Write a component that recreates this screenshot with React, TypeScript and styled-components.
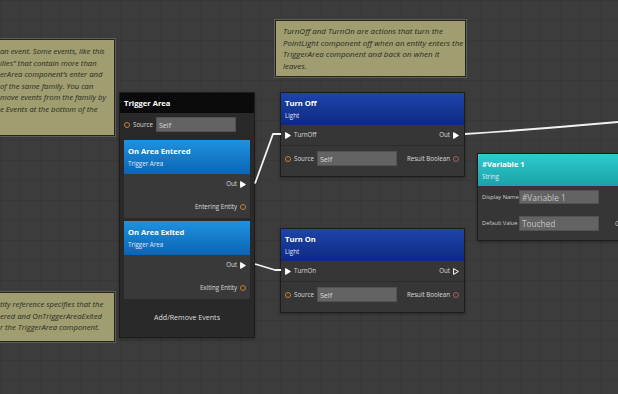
import React from "react";
import styled, { createGlobalStyle } from "styled-components";

const GlobalStyle = createGlobalStyle`
  html, body {
    margin: 0;
    padding: 0;
    background: #3c3c3c;
  }
  body {
    font-family: "Open Sans", "Liberation Sans", sans-serif;
  }
`;

const Canvas = styled.div`
  position: relative;
  width: 618px;
  height: 394px;
  overflow: hidden;
  background-color: #3c3c3c;
  background-image: linear-gradient(rgba(0, 0, 0, 0.06) 1px, transparent 1px),
    linear-gradient(90deg, rgba(0, 0, 0, 0.06) 1px, transparent 1px);
  background-size: 20px 20px;
`;

type Box = { $x: number; $y: number; $w: number; $h: number };

const Comment = styled.div<Box & { $size?: number; $pad?: string }>`
  position: absolute;
  left: ${(p) => p.$x}px;
  top: ${(p) => p.$y}px;
  width: ${(p) => p.$w}px;
  height: ${(p) => p.$h}px;
  box-sizing: border-box;
  padding: ${(p) => p.$pad ?? "6px 9px"};
  background: #a09e71;
  border: 1px solid #26261e;
  box-shadow: 0 0 0 1px #5c5c52;
  color: #29291b;
  font-style: italic;
  font-size: ${(p) => p.$size ?? 7.7}px;
  line-height: 11.6px;
  white-space: nowrap;
  overflow: hidden;
`;

const Node = styled.div<Box & { $dark?: boolean }>`
  position: absolute;
  left: ${(p) => p.$x}px;
  top: ${(p) => p.$y}px;
  width: ${(p) => p.$w}px;
  height: ${(p) => p.$h}px;
  box-sizing: border-box;
  display: flex;
  flex-direction: column;
  background: ${(p) => (p.$dark ? "#292929" : "#363636")};
  border: 1px solid #1d1d1d;
  box-shadow: 0 1px 3px rgba(0, 0, 0, 0.35);
  color: #dadada;
`;

const headerTones = {
  black: "#0a0a0a",
  event: "linear-gradient(180deg, #1e92e0 0%, #0c64b4 100%)",
  action: "linear-gradient(180deg, #1e44ac 0%, #0c2a80 100%)",
  variable: "linear-gradient(180deg, #2fcbcf 0%, #19a2a7 100%)",
};

const Header = styled.div<{ $tone: keyof typeof headerTones; $h: number }>`
  flex: none;
  height: ${(p) => p.$h}px;
  box-sizing: border-box;
  padding: 0 4px;
  display: flex;
  flex-direction: column;
  justify-content: center;
  gap: 1px;
  background: ${(p) => headerTones[p.$tone]};
`;

const Title = styled.div`
  font-size: 7.6px;
  font-weight: 700;
  line-height: 12px;
  color: #ffffff;
`;

const Subtitle = styled.div`
  font-size: 6.2px;
  line-height: 12px;
  color: #e2ebfb;
`;

const Row = styled.div<{ $h: number; $line?: boolean }>`
  flex: none;
  height: ${(p) => p.$h}px;
  box-sizing: border-box;
  padding: 0 5px 0 4px;
  display: flex;
  align-items: center;
  justify-content: space-between;
  border-bottom: ${(p) => (p.$line ? "1px solid #2c2c2c" : "none")};
`;

const Pin = styled.div<{ $end?: boolean }>`
  display: flex;
  align-items: center;
  gap: 3px;
  margin-left: ${(p) => (p.$end ? "auto" : "0")};
`;

const Label = styled.span`
  font-size: 6.2px;
  line-height: 12px;
  color: #dcdcdc;
  white-space: nowrap;
`;

const Ring = styled.span<{ $color: string }>`
  width: 6px;
  height: 6px;
  box-sizing: border-box;
  border: 1px solid ${(p) => p.$color};
  border-radius: 50%;
`;

const ValueBox = styled.div<{ $w: number; $h: number; $large?: boolean }>`
  width: ${(p) => p.$w}px;
  height: ${(p) => p.$h}px;
  box-sizing: border-box;
  padding-left: 2px;
  display: flex;
  align-items: center;
  background: #636363;
  border: 1px solid #525252;
  font-size: ${(p) => (p.$large ? 8.3 : 7.2)}px;
  color: ${(p) => (p.$large ? "#c4c4c4" : "#dadada")};
  white-space: nowrap;
  overflow: hidden;
`;

const EventList = styled.div`
  display: flex;
  flex-direction: column;
  gap: 3px;
  padding: 4px 4px 0;
`;

const EventCard = styled.div`
  background: #393939;
`;

const CardBody = styled.div`
  display: flex;
  flex-direction: column;
  gap: 11px;
  padding: 4px 4px 5px;
`;

const CardRow = styled.div`
  height: 12px;
  display: flex;
  align-items: center;
  justify-content: flex-end;
`;

const Footer = styled.div`
  flex: 1;
  display: flex;
  align-items: center;
  justify-content: center;
  padding-bottom: 3px;
  font-size: 7.1px;
  color: #dedede;
`;

const FieldList = styled.div`
  display: flex;
  flex-direction: column;
  gap: 4px;
  padding-bottom: 5px;
`;

const FieldRow = styled.div`
  height: 22px;
  display: flex;
  align-items: center;
  gap: 3px;
  padding-left: 4px;
`;

const FieldLabel = styled.span`
  width: 34px;
  font-size: 5.7px;
  color: #cfcfcf;
  white-space: nowrap;
`;

const Trailing = styled.span`
  margin-left: 13px;
  font-size: 6.5px;
  color: #cfcfcf;
`;

const Wires = styled.svg`
  position: absolute;
  left: 0;
  top: 0;
  width: 618px;
  height: 394px;
  pointer-events: none;
  path {
    fill: none;
    stroke: #f2f2f2;
    stroke-width: 1.8;
    stroke-linejoin: round;
  }
`;

const Exec = ({ filled = true }: { filled?: boolean }) => (
  <svg width="6" height="7" viewBox="0 0 6 7">
    <polygon
      points="0.6,0.6 5.4,3.5 0.6,6.4"
      fill={filled ? "#ffffff" : "none"}
      stroke="#ffffff"
      strokeWidth="1"
    />
  </svg>
);

const ORANGE = "#c47f3c";
const ROSE = "#9a6464";

const leftNote = [
  "an event. Some events, like this",
  "ilies\u201d that contain more than",
  "erArea component\u2019s enter and",
  "of the same family. You can",
  "move events from the family by",
  "e Events at the bottom of the",
];

const topNote = [
  "TurnOff and TurnOn are actions that turn the",
  "PointLight component off when an entity enters the",
  "TriggerArea component and back on when it",
  "leaves.",
];

const bottomNote = [
  "tity reference specifies that the",
  "ered and OnTriggerAreaExited",
  "r the TriggerArea component.",
];

const events = [
  { name: "On Area Entered", entity: "Entering Entity" },
  { name: "On Area Exited", entity: "Exiting Entity" },
];

const actions = [
  { name: "Turn Off", y: 92, out: true },
  { name: "Turn On", y: 228, out: false },
];

export default function App() {
  return (
    <>
      <GlobalStyle />
      <Canvas>
        <Comment $x={-10} $y={39} $w={125} $h={97}>
          {leftNote.map((line) => (
            <div key={line}>{line}</div>
          ))}
        </Comment>
        <Comment $x={275} $y={20} $w={191} $h={57} $size={8} $pad="4px 7px">
          {topNote.map((line) => (
            <div key={line}>{line}</div>
          ))}
        </Comment>
        <Comment $x={-10} $y={292} $w={125} $h={50}>
          {bottomNote.map((line) => (
            <div key={line}>{line}</div>
          ))}
        </Comment>

        <Node $x={119} $y={92} $w={136} $h={246} $dark>
          <Header $tone="black" $h={20}>
            <Title>Trigger Area</Title>
          </Header>
          <Row $h={23}>
            <Pin>
              <Ring $color={ORANGE} />
              <Label>Source</Label>
              <ValueBox $w={80} $h={15}>Self</ValueBox>
            </Pin>
          </Row>
          <EventList>
            {events.map((ev) => (
              <EventCard key={ev.name}>
                <Header $tone="event" $h={34}>
                  <Title>{ev.name}</Title>
                  <Subtitle>Trigger Area</Subtitle>
                </Header>
                <CardBody>
                  <CardRow>
                    <Pin>
                      <Label>Out</Label>
                      <Exec />
                    </Pin>
                  </CardRow>
                  <CardRow>
                    <Pin>
                      <Label>{ev.entity}</Label>
                      <Ring $color={ORANGE} />
                    </Pin>
                  </CardRow>
                </CardBody>
              </EventCard>
            ))}
          </EventList>
          <Footer>Add/Remove Events</Footer>
        </Node>

        {actions.map((a) => (
          <Node key={a.name} $x={280} $y={a.y} $w={185} $h={85}>
            <Header $tone="action" $h={32}>
              <Title>{a.name}</Title>
              <Subtitle>Light</Subtitle>
            </Header>
            <Row $h={21} $line>
              <Pin>
                <Exec />
                <Label>{a.name.replace(" ", "")}</Label>
              </Pin>
              <Pin>
                <Label>Out</Label>
                <Exec filled={a.out} />
              </Pin>
            </Row>
            <Row $h={25}>
              <Pin>
                <Ring $color={ORANGE} />
                <Label>Source</Label>
                <ValueBox $w={80} $h={15}>Self</ValueBox>
              </Pin>
              <Pin $end>
                <Label>Result Boolean</Label>
                <Ring $color={ROSE} />
              </Pin>
            </Row>
          </Node>
        ))}

        <Node $x={477} $y={153} $w={200} $h={88}>
          <Header $tone="variable" $h={32}>
            <Title>#Variable 1</Title>
            <Subtitle>String</Subtitle>
          </Header>
          <FieldList>
            <FieldRow>
              <FieldLabel>Display Name</FieldLabel>
              <ValueBox $w={80} $h={14} $large>#Variable 1</ValueBox>
            </FieldRow>
            <FieldRow>
              <FieldLabel>Default Value</FieldLabel>
              <ValueBox $w={80} $h={15} $large>Touched</ValueBox>
              <Trailing>Get</Trailing>
            </FieldRow>
          </FieldList>
        </Node>

        <Wires viewBox="0 0 618 394">
          <path d="M255 183.5 L273 134 L281 134" />
          <path d="M255 264 L275 270 L281 270" />
          <path d="M465 134 Q540 129 618 122" />
        </Wires>
      </Canvas>
    </>
  );
}
